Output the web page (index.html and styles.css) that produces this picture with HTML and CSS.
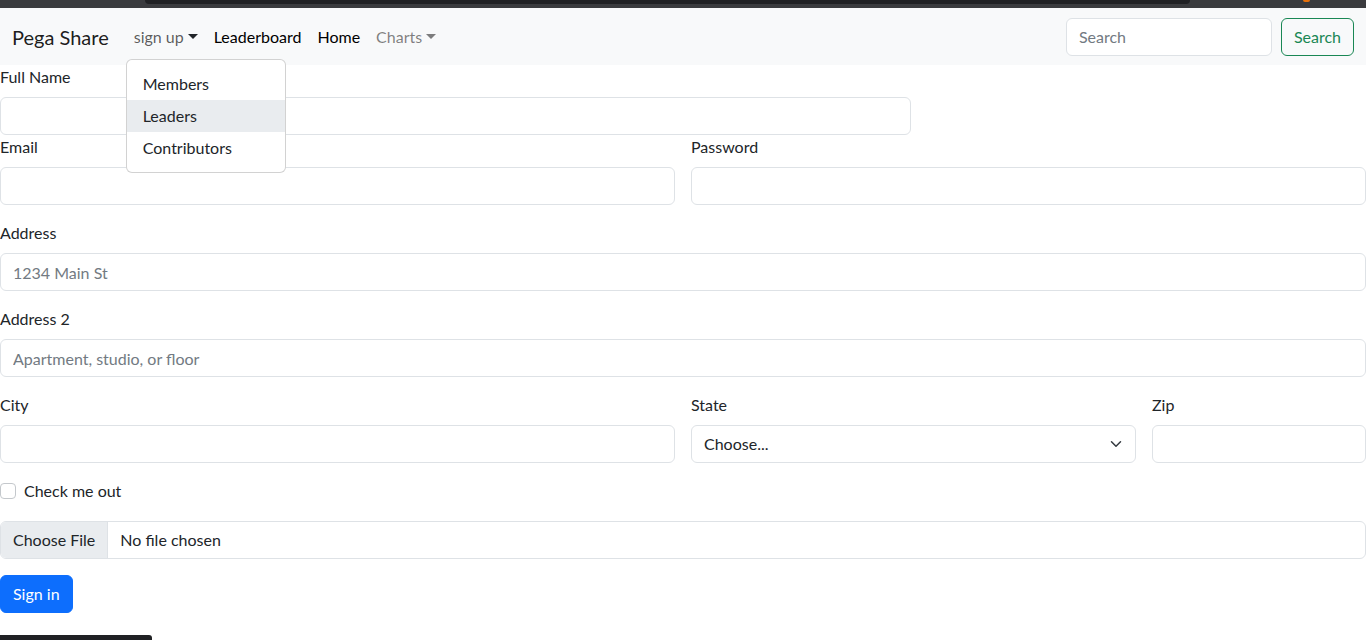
FILE: index.html
```html
<!DOCTYPE html>
<html lang="en">
<head>
    <meta charset="UTF-8">
    <meta name="viewport" content="width=device-width, initial-scale=1.0">
    <title>Pega Share</title>
    <link rel="stylesheet" href="styles.css">
</head>
<body>
    <!-- strip of the browser window above the page -->
    <div class="chrome">
        <div class="chrome-tab"></div>
        <div class="chrome-dot"></div>
    </div>

    <nav class="navbar">
        <a class="brand" href="#">Pega Share</a>
        <ul class="nav">
            <li class="nav-item">
                <a class="nav-link toggle signup" href="#">sign up</a>
                <ul class="dropdown">
                    <li><a class="dropdown-item" href="#">Members</a></li>
                    <li><a class="dropdown-item hover" href="#">Leaders</a></li>
                    <li><a class="dropdown-item" href="#">Contributors</a></li>
                </ul>
            </li>
            <li class="nav-item"><a class="nav-link active" href="#">Leaderboard</a></li>
            <li class="nav-item"><a class="nav-link active" href="#">Home</a></li>
            <li class="nav-item"><a class="nav-link toggle muted" href="#">Charts</a></li>
        </ul>
        <form class="search">
            <input class="control search-input" type="search" placeholder="Search">
            <button class="btn btn-outline" type="submit">Search</button>
        </form>
    </nav>

    <form class="signup-form">
        <div class="field full">
            <label class="label" for="name">Full Name</label>
            <input class="control" id="name" type="text">
        </div>

        <div class="row two">
            <div class="field">
                <label class="label" for="email">Email</label>
                <input class="control" id="email" type="email">
            </div>
            <div class="field">
                <label class="label" for="password">Password</label>
                <input class="control" id="password" type="password">
            </div>
        </div>

        <div class="row">
            <div class="field">
                <label class="label" for="address">Address</label>
                <input class="control" id="address" type="text" placeholder="1234 Main St">
            </div>
        </div>

        <div class="row">
            <div class="field">
                <label class="label" for="address2">Address 2</label>
                <input class="control" id="address2" type="text" placeholder="Apartment, studio, or floor">
            </div>
        </div>

        <div class="row three">
            <div class="field">
                <label class="label" for="city">City</label>
                <input class="control" id="city" type="text">
            </div>
            <div class="field">
                <label class="label" for="state">State</label>
                <div class="select-wrap">
                    <select class="control select" id="state">
                        <option selected>Choose...</option>
                        <option>...</option>
                    </select>
                    <svg class="chevron" viewBox="0 0 16 16" width="16" height="12">
                        <path d="m2 5 6 6 6-6" fill="none" stroke="#343a40" stroke-width="2" stroke-linecap="round" stroke-linejoin="round"/>
                    </svg>
                </div>
            </div>
            <div class="field">
                <label class="label" for="zip">Zip</label>
                <input class="control" id="zip" type="text">
            </div>
        </div>

        <div class="row">
            <div class="check">
                <input class="check-input" type="checkbox" id="check">
                <label for="check">Check me out</label>
            </div>
        </div>

        <div class="row file-row">
            <input class="control file" type="file">
        </div>

        <div class="row">
            <button class="btn btn-primary" type="submit">Sign in</button>
        </div>
    </form>

    <div class="taskbar"></div>
</body>
</html>
```

FILE: styles.css
```css
* {
    box-sizing: border-box;
}
body {
    margin: 0;
    font-family: Lato, Roboto, sans-serif;
    font-size: 16px;
    line-height: 1.5;
    color: #212529;
    background: #fff;
    overflow: hidden;
}
a {
    text-decoration: none;
}

.chrome {
    display: flex;
    height: 8px;
    background: #3a3b3e;
}
.chrome-tab {
    width: 1045px;
    height: 4px;
    margin-left: 145px;
    background: #202124;
    border-radius: 0 0 8px 8px;
}
.chrome-dot {
    width: 7px;
    height: 2px;
    margin-left: 113px;
    background: #e8710a;
    border-radius: 0 0 3px 3px;
}

.navbar {
    display: flex;
    align-items: center;
    height: 57px;
    padding: 0 12px;
    background: #f8f9fa;
}
.brand {
    margin-right: 17px;
    padding: 5px 0;
    font-size: 20px;
    color: rgba(0, 0, 0, 0.9);
}
.nav {
    display: flex;
    margin: 0;
    padding: 0;
    list-style: none;
}
.nav-item {
    position: relative;
}
.nav-link {
    display: block;
    padding: 8px;
}
.nav-link.signup {
    color: rgba(0, 0, 0, 0.65);
}
.nav-link.active {
    color: #000;
}
.nav-link.muted {
    color: rgba(0, 0, 0, 0.5);
}
.toggle::after {
    content: "";
    display: inline-block;
    margin-left: 4px;
    vertical-align: 4px;
    border-top: 5px solid;
    border-left: 5px solid transparent;
    border-right: 5px solid transparent;
}
.toggle.signup::after {
    border-top-color: #212529;
}

.dropdown {
    position: absolute;
    top: 100%;
    left: 0;
    z-index: 10;
    min-width: 160px;
    margin: 2px 0 0;
    padding: 8px 0;
    list-style: none;
    background: #fff;
    border: 1px solid rgba(0, 0, 0, 0.175);
    border-radius: 6px;
}
.dropdown-item {
    display: block;
    padding: 4px 16px;
    color: #212529;
    white-space: nowrap;
}
.dropdown-item.hover {
    background: #e9ecef;
}

.search {
    display: flex;
    gap: 9px;
    margin-left: auto;
}

.control {
    display: block;
    width: 100%;
    height: 38px;
    padding: 6px 12px;
    font: inherit;
    color: #212529;
    background: #fff;
    border: 1px solid #dee2e6;
    border-radius: 6px;
    appearance: none;
}
.control::placeholder {
    color: #727a82;
}
.search .search-input {
    width: 206px;
}

.btn {
    height: 38px;
    padding: 6px 12px;
    font: inherit;
    border: 1px solid transparent;
    border-radius: 6px;
    cursor: pointer;
}
.btn-outline {
    color: #198754;
    background: transparent;
    border-color: #198754;
}
.btn-primary {
    color: #fff;
    background: #0d6efd;
    border-color: #0d6efd;
}

.signup-form {
    display: flex;
    flex-direction: column;
}
.label {
    display: block;
    margin-bottom: 8px;
}
.field.full {
    width: 911px;
}
.row {
    margin-top: 16px;
}
.row.two {
    display: grid;
    grid-template-columns: 1fr 1fr;
    gap: 16px;
    margin-top: 0;
}
.row.three {
    display: grid;
    grid-template-columns: 675fr 445fr 214fr;
    gap: 16px;
}

.select-wrap {
    position: relative;
}
.select {
    padding-right: 36px;
}
.chevron {
    position: absolute;
    top: 13px;
    right: 12px;
    pointer-events: none;
}

.check {
    display: flex;
    align-items: center;
    gap: 8px;
    min-height: 24px;
    margin-bottom: 2px;
}
.check-input {
    width: 16px;
    height: 16px;
    margin: 0;
    appearance: none;
    background: #fff;
    border: 1px solid #c4c8cc;
    border-radius: 4px;
}

.file {
    padding: 6px 12px;
    line-height: 24px;
}
.file::file-selector-button {
    height: 36px;
    margin: -6px 12px -6px -12px;
    padding: 6px 12px;
    font: inherit;
    color: #212529;
    background: #e9ecef;
    border: 0;
    border-right: 1px solid #dee2e6;
    border-radius: 0;
}

.taskbar {
    width: 152px;
    height: 10px;
    margin-top: 22px;
    background: #202124;
    border-radius: 0 3px 0 0;
}
```
